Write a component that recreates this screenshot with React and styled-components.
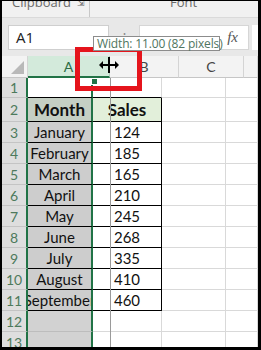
import { createGlobalStyle, styled } from 'styled-components';

const GlobalStyle = createGlobalStyle`
    body {
        margin: 0;
        font-family: Lato, "Liberation Sans", sans-serif;
    }
`

const Frame = styled.div`
    position: relative;
    box-sizing: border-box;
    width: 261px;
    height: 350px;
    border-style: solid;
    border-color: #000;
    border-width: 1px 3px 3px 2px;
    background: #fff;
    overflow: hidden;
    display: flex;
    flex-direction: column;
`

const Ribbon = styled.div`
    height: 16px;
    flex: none;
    display: flex;
    background: #f1f1f1;
    border-bottom: 1px solid #dadada;
    color: #6a6a6a;
    font-family: "Open Sans", sans-serif;
    font-size: 13px;
    line-height: 12px;
`

const RibbonGroup = styled.div`
    width: ${props => props.$width}px;
    display: flex;
    padding-left: ${props => props.$pad || 0}px;
    box-sizing: border-box;
    border-right: ${props => props.$divider ? '1px solid #c8c8c8' : 'none'};
`

const RibbonLabel = styled.span`
    margin-top: -5px;
`

const Launcher = styled.span`
    margin-left: auto;
    margin-right: 4px;
    font-size: 9px;
    margin-top: -4px;
`

const FormulaBar = styled.div`
    height: 38px;
    flex: none;
    display: flex;
    align-items: center;
    background: #e8e8e8;
    padding-left: 6px;
`

const NameBox = styled.div`
    width: 101px;
    height: 25px;
    box-sizing: border-box;
    background: #fff;
    border: 1px solid #cfcfcf;
    font-family: "Open Sans", sans-serif;
    font-size: 15px;
    line-height: 23px;
    padding-left: 7px;
    color: #222;
`

const Dots = styled.div`
    width: 30px;
    text-align: center;
    color: #8a8a8a;
    font-size: 13px;
`

const FxBox = styled.div`
    width: 110px;
    height: 25px;
    box-sizing: border-box;
    background: #fff;
    border: 1px solid #d6d6d6;
    display: flex;
    justify-content: flex-end;
    align-items: center;
    padding-right: 10px;
    font-family: "Liberation Serif", serif;
    font-style: italic;
    font-size: 15px;
    color: #555;
`

const FormulaInput = styled.div`
    flex: 1;
    height: 25px;
    margin-left: 3px;
    background: #fff;
`

const HeaderRow = styled.div`
    height: 22px;
    flex: none;
    display: grid;
    grid-template-columns: 26px 82px 69px 65px 1fr;
    background: #f3f3f3;
`

const Corner = styled.div`
    position: relative;
    border-right: 1px solid #d4d4d4;
    border-bottom: 1px solid #c6c6c6;
    &::after {
        content: "";
        position: absolute;
        right: 3px;
        bottom: 3px;
        border-style: solid;
        border-width: 0 0 13px 13px;
        border-color: transparent transparent #b9b9b9 transparent;
    }
`

const ColHead = styled.div`
    display: flex;
    align-items: center;
    justify-content: center;
    font-size: 14px;
    color: ${props => props.$selected ? '#2c6b45' : '#444'};
    background: ${props => props.$selected ? '#d3eadb' : '#f3f3f3'};
    border-right: 1px solid ${props => props.$selected ? '#b4cfbe' : '#d4d4d4'};
    border-bottom: ${props => props.$selected ? '2px solid #217346' : '1px solid #c6c6c6'};
    box-sizing: border-box;
`

const Sheet = styled.div`
    display: grid;
    grid-template-columns: 26px 65px 69px 64px 1fr;
    grid-template-rows: 20px 24px repeat(11, 21px);
`

const RowHead = styled.div`
    display: flex;
    align-items: center;
    justify-content: center;
    font-size: 14px;
    color: #4d7a5c;
    background: #dedede;
    border-bottom: 1px solid #c4c4c4;
    border-right: 2px solid #217346;
    box-sizing: border-box;
`

const Cell = styled.div`
    display: flex;
    align-items: center;
    justify-content: center;
    box-sizing: border-box;
    font-size: ${props => props.$bold ? '17px' : '15px'};
    font-weight: ${props => props.$bold ? 700 : 400};
    color: #111;
    white-space: nowrap;
    overflow: hidden;
    background: ${props => props.$bg || '#fff'};
    border-right: 1px solid ${props => props.$edge || '#d9d9d9'};
    border-bottom: 1px solid ${props => props.$under || '#d9d9d9'};
`

const ColumnACell = styled(Cell)`
    border-right: 2px solid #217346;
`

const DragLine = styled.div`
    position: absolute;
    left: 108px;
    top: 77px;
    bottom: 0;
    width: 1px;
    background: #9a9a9a;
`

const FillHandle = styled.div`
    position: absolute;
    left: 89px;
    top: 77px;
    width: 5px;
    height: 5px;
    background: #217346;
    border: 1px solid #fff;
`

const Tooltip = styled.div`
    position: absolute;
    left: 91px;
    top: 35px;
    width: 127px;
    height: 15px;
    box-sizing: border-box;
    background: #fff;
    border: 1px solid #8c8c8c;
    font-family: "Open Sans", sans-serif;
    font-size: 12px;
    letter-spacing: -0.15px;
    line-height: 13px;
    padding-left: 3px;
    color: #4f7560;
    white-space: nowrap;
    z-index: 3;
`

const Highlight = styled.div`
    position: absolute;
    left: 73px;
    top: 46px;
    width: 67px;
    height: 44px;
    box-sizing: border-box;
    border: 5px solid #e5141c;
    display: flex;
    align-items: center;
    justify-content: center;
    z-index: 2;
`

const Cursor = styled.svg`
    width: 20px;
    height: 16px;
    margin-top: -8px;
`

const months = ['January', 'February', 'March', 'April', 'May', 'June', 'July', 'August', 'September']
const sales = [124, 185, 165, 210, 245, 268, 335, 410, 460]

export default function App() {
    return (
        <>
            <GlobalStyle />
            <Frame>
                <Ribbon>
                    <RibbonGroup $width={88} $pad={10} $divider>
                        <RibbonLabel>Clipboard</RibbonLabel>
                        <Launcher>⇲</Launcher>
                    </RibbonGroup>
                    <RibbonGroup $width={150} $pad={80}>
                        <RibbonLabel>Font</RibbonLabel>
                    </RibbonGroup>
                </Ribbon>
                <FormulaBar>
                    <NameBox>A1</NameBox>
                    <Dots>⋮</Dots>
                    <FxBox>fx</FxBox>
                    <FormulaInput />
                </FormulaBar>
                <HeaderRow>
                    <Corner />
                    <ColHead $selected>A</ColHead>
                    <ColHead>B</ColHead>
                    <ColHead>C</ColHead>
                    <ColHead />
                </HeaderRow>
                <Sheet>
                    <RowHead>1</RowHead>
                    <ColumnACell $under="#000" />
                    <Cell $under="#000" />
                    <Cell />
                    <Cell />

                    <RowHead>2</RowHead>
                    <ColumnACell $bold $bg="#c5cfc4" $under="#000">Month</ColumnACell>
                    <Cell $bold $bg="#e2efda" $under="#000" $edge="#000">Sales</Cell>
                    <Cell />
                    <Cell />

                    {months.map((m, i) => (
                        <>
                            <RowHead key={'h' + i}>{i + 3}</RowHead>
                            <ColumnACell key={'a' + i} $bg="#cdcdcd" $under="#000">{m}</ColumnACell>
                            <Cell key={'b' + i} $under="#000" $edge="#000">{sales[i]}</Cell>
                            <Cell key={'c' + i} />
                            <Cell key={'d' + i} />
                        </>
                    ))}

                    {[12, 13].map(n => (
                        <>
                            <RowHead key={'h' + n}>{n}</RowHead>
                            <ColumnACell key={'a' + n} $bg="#d2d2d2" $under="#bdbdbd" />
                            <Cell key={'b' + n} />
                            <Cell key={'c' + n} />
                            <Cell key={'d' + n} />
                        </>
                    ))}
                </Sheet>
                <DragLine />
                <FillHandle />
                <Tooltip>Width: 11.00 (82 pixels)</Tooltip>
                <Highlight>
                    <Cursor viewBox="0 0 20 16">
                        <path d="M10 0v16" stroke="#000" strokeWidth="2" />
                        <path d="M1 8h18" stroke="#000" strokeWidth="2" />
                        <path d="M0 8l4-4v8z M20 8l-4-4v8z" fill="#000" />
                    </Cursor>
                </Highlight>
            </Frame>
        </>
    )
}
